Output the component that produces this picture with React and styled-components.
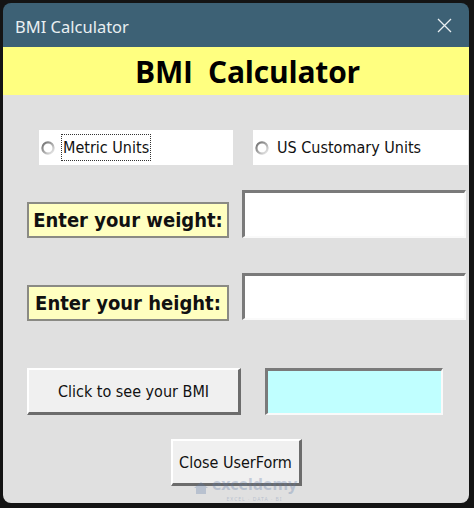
import React from 'react';
import styled, { createGlobalStyle } from 'styled-components';

/* colours taken from the form */
const titleBlue = '#3d6175';
const bannerYellow = '#ffff80';
const formGrey = '#e0e0e0';
const labelYellow = '#ffffc0';
const resultCyan = '#c0ffff';
const shadowGrey = '#7a7a7a';

const GlobalStyle = createGlobalStyle`
  html, body {
    margin: 0;
    padding: 0;
    background: #141414;
  }
`;

const Window = styled.div`
  margin: 3px 0 0 3px;
  width: 466px;
  height: 500px;
  border-radius: 8px;
  overflow: hidden;
  display: flex;
  flex-direction: column;
  font-family: 'DejaVu Sans Condensed', 'DejaVu Sans', sans-serif;
`;

const TitleBar = styled.div`
  height: 44px;
  flex: none;
  display: flex;
  align-items: center;
  justify-content: space-between;
  padding: 0 17px 0 12px;
  background: ${titleBlue};
  color: #e9eff2;
`;

const TitleText = styled.span`
  font-family: 'Noto Sans', sans-serif;
  font-size: 16.5px;
  padding-top: 2px;
`;

const CloseIcon = styled.svg`
  width: 15px;
  height: 15px;
  margin-top: 1px;
`;

const Banner = styled.div`
  height: 48px;
  flex: none;
  display: flex;
  align-items: center;
  justify-content: center;
  padding-left: 23px;
  background: ${bannerYellow};
`;

const BannerText = styled.h1`
  margin: 0;
  white-space: pre;
  font-family: 'Open Sans', sans-serif;
  font-size: 30px;
  font-weight: 700;
  letter-spacing: -0.2px;
  color: #000;
`;

const FormBody = styled.div`
  position: relative;
  flex: 1;
  display: flex;
  flex-direction: column;
  padding-top: 35px;
  background: ${formGrey};
`;

const Row = styled.div`
  display: flex;
  align-items: flex-start;
  justify-content: ${(props) => (props.$center ? 'center' : 'flex-start')};
  gap: ${(props) => props.$gap || 0}px;
  margin-top: ${(props) => props.$top || 0}px;
  padding-left: ${(props) => (props.$center ? 0 : props.$left || 0)}px;
`;

const RadioBox = styled.label`
  display: flex;
  align-items: center;
  gap: 6px;
  box-sizing: border-box;
  width: ${(props) => props.$width}px;
  height: 35px;
  padding-left: 2px;
  background: #fff;
  font-size: 16px;
  color: #111;
`;

const RadioText = styled.span`
  padding: 3px 1px;
  border: 1px dotted ${(props) => (props.$focused ? '#333' : 'transparent')};
`;

const FieldLabel = styled.div`
  box-sizing: border-box;
  width: 202px;
  height: 36px;
  margin-top: 12px;
  display: flex;
  align-items: center;
  justify-content: center;
  background: ${labelYellow};
  border: 2px solid #8a8a84;
  font-size: 20px;
  font-weight: 700;
  color: #111;
`;

const TextBox = styled.div`
  box-sizing: border-box;
  width: ${(props) => props.$width}px;
  height: ${(props) => props.$height}px;
  background: ${(props) => props.$fill || '#fff'};
  border-top: 3px solid ${shadowGrey};
  border-left: 3px solid ${shadowGrey};
  border-right: 2px solid #fafafa;
  border-bottom: 2px solid #fafafa;
`;

const FormButton = styled.button`
  box-sizing: border-box;
  width: ${(props) => props.$width}px;
  height: 47px;
  padding: 0;
  background: #f0f0f0;
  border-top: 2px solid #fff;
  border-left: 2px solid #fff;
  border-right: 3px solid #6c6c6c;
  border-bottom: 3px solid #6c6c6c;
  font-family: 'DejaVu Sans Condensed', 'DejaVu Sans', sans-serif;
  font-size: 16px;
  color: #111;
`;

// faint site watermark lying over the close button
const Watermark = styled.div`
  position: absolute;
  left: 190px;
  bottom: 0;
  display: flex;
  align-items: center;
  gap: 3px;
  opacity: 0.3;
  color: #5f7aa8;
  pointer-events: none;
`;

const WatermarkName = styled.div`
  display: flex;
  flex-direction: column;
  align-items: center;
  font-family: 'Noto Sans', sans-serif;
  font-size: 16px;
  font-weight: 700;
  line-height: 22px;
`;

const WatermarkTag = styled.span`
  font-size: 5px;
  line-height: 8px;
  letter-spacing: 1px;
  font-weight: 400;
`;

function RadioCircle() {
  return (
    <svg width="14" height="14" viewBox="0 0 14 14">
      <defs>
        <linearGradient id="ring" x1="0" y1="0" x2="1" y2="1">
          <stop offset="0" stopColor="#6e6e6e" />
          <stop offset="0.55" stopColor="#adadad" />
          <stop offset="1" stopColor="#f0f0f0" />
        </linearGradient>
      </defs>
      <circle cx="7" cy="7" r="5.6" fill="#fff" stroke="url(#ring)" strokeWidth="2.2" />
    </svg>
  );
}

function BmiForm() {
  return (
    <Window>
      <TitleBar>
        <TitleText>BMI Calculator</TitleText>
        <CloseIcon viewBox="0 0 15 15">
          <path d="M1 1 L14 14 M14 1 L1 14" stroke="#e9eff2" strokeWidth="1.3" fill="none" />
        </CloseIcon>
      </TitleBar>
      <Banner>
        <BannerText>{'BMI  Calculator'}</BannerText>
      </Banner>
      <FormBody>
        <Row $left={36} $gap={20}>
          <RadioBox $width={194}>
            <RadioCircle />
            <RadioText $focused>Metric Units</RadioText>
          </RadioBox>
          <RadioBox $width={215}>
            <RadioCircle />
            <RadioText>US Customary Units</RadioText>
          </RadioBox>
        </Row>
        <Row $left={24} $gap={13} $top={25}>
          <FieldLabel>Enter your weight:</FieldLabel>
          <TextBox $width={224} $height={48} />
        </Row>
        <Row $left={24} $gap={13} $top={35}>
          <FieldLabel>Enter your height:</FieldLabel>
          <TextBox $width={224} $height={47} />
        </Row>
        <Row $left={24} $gap={24} $top={47}>
          <FormButton $width={214}>Click to see your BMI</FormButton>
          <TextBox $width={178} $height={47} $fill={resultCyan} />
        </Row>
        <Row $center $top={24}>
          <FormButton $width={131}>Close UserForm</FormButton>
        </Row>
        <Watermark>
          <svg width="16" height="14" viewBox="0 0 16 14">
            <path d="M8 1 L15 7 L13 7 L13 13 L3 13 L3 7 L1 7 Z" fill="currentColor" />
          </svg>
          <WatermarkName>
            exceldemy
            <WatermarkTag>EXCEL · DATA · BI</WatermarkTag>
          </WatermarkName>
        </Watermark>
      </FormBody>
    </Window>
  );
}

export default function App() {
  return (
    <>
      <GlobalStyle />
      <BmiForm />
    </>
  );
}
